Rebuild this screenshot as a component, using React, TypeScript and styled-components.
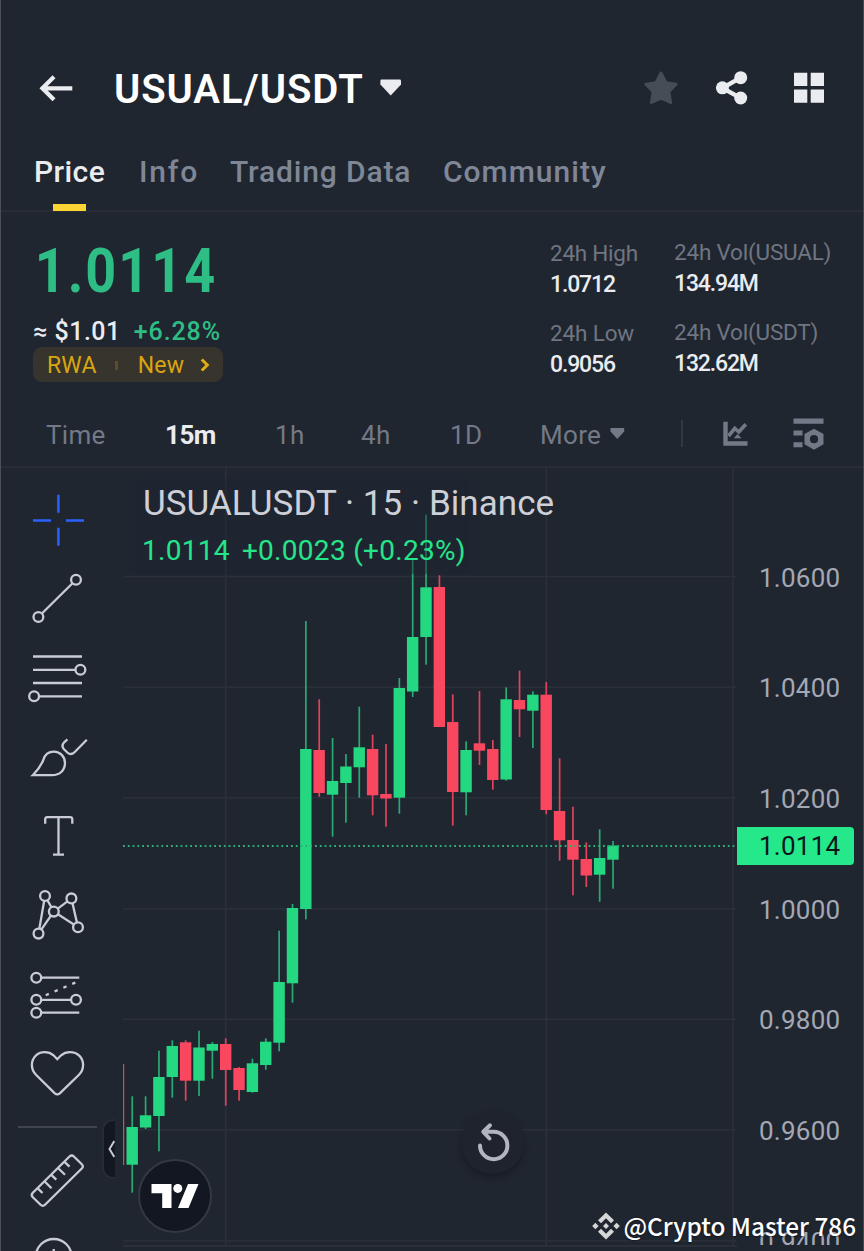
import React from "react";
import styled, { createGlobalStyle } from "styled-components";

const BG = "#202630";
const UP = "#24d881";
const UP_WICK = "#29a973";
const DOWN = "#f8475e";
const DOWN_WICK = "#e0435a";
const LINE = "#2a2f3a";

const GlobalStyle = createGlobalStyle`
  *, *::before, *::after { box-sizing: border-box; }
  body { margin: 0; background: ${BG}; }
`;

const Screen = styled.div`
  position: relative;
  width: 864px;
  height: 1251px;
  overflow: hidden;
  display: flex;
  flex-direction: column;
  background: ${BG};
  border-left: 1px solid #4b5058;
  border-right: 1px solid #43484f;
  font-family: Roboto, "Liberation Sans", sans-serif;
  color: #eaecef;
  white-space: pre;
`;

/* ---------- header ---------- */
const Header = styled.header`
  display: flex;
  align-items: center;
  height: 140px;
  padding: 35px 38px 0 38px;
`;
const PairButton = styled.div`
  display: flex;
  align-items: center;
  margin-left: 41px;
  gap: 16px;
`;
const PairName = styled.h1`
  margin: 0;
  font-size: 40px;
  line-height: 44px;
  font-weight: 600;
  letter-spacing: 0.95px;
  color: #ffffff;
  padding-top: 5px;
`;
const HeaderActions = styled.div`
  display: flex;
  align-items: center;
  margin-left: auto;
`;
const Action = styled.svg<{ $gap?: number }>`
  display: block;
  width: 34px;
  height: 34px;
  margin-right: ${(p) => p.$gap ?? 0}px;
`;

/* ---------- tabs ---------- */
const Tabs = styled.nav`
  display: flex;
  height: 72px;
  padding-left: 31px;
  border-bottom: 2px solid #282d37;
`;
const Tab = styled.div<{ $active?: boolean; $width: number; $spacing?: number }>`
  position: relative;
  width: ${(p) => p.$width}px;
  padding-left: 2px;
  font-size: 30px;
  line-height: 64px;
  font-weight: 500;
  letter-spacing: ${(p) => p.$spacing ?? 0.5}px;
  color: ${(p) => (p.$active ? "#eaecef" : "#7f8796")};
`;
const TabMark = styled.span`
  position: absolute;
  left: 21px;
  bottom: -1px;
  width: 33px;
  height: 7px;
  background: #fcd535;
`;

/* ---------- summary ---------- */
const Summary = styled.section`
  display: flex;
  height: 189px;
  padding-left: 32px;
`;
const PriceBlock = styled.div`
  width: 517px;
  padding-top: 25px;
`;
const BigPrice = styled.div`
  font-size: 62px;
  line-height: 68px;
  font-weight: 700;
  letter-spacing: 2.3px;
  transform: scaleX(0.87);
  transform-origin: 0 50%;
  color: #2ebd85;
  padding-left: 2px;
`;
const FiatRow = styled.div`
  display: flex;
  gap: 13px;
  margin-top: 12px;
  font-size: 25px;
  line-height: 30px;
  font-weight: 500;
  letter-spacing: 0.5px;
`;
const Change = styled.span`
  color: #2ebd85;
  letter-spacing: 0.9px;
`;
const TagBar = styled.div`
  display: flex;
  align-items: center;
  width: 190px;
  height: 35px;
  padding: 1px 13px 0 14px;
  border-radius: 9px;
  background: #37342d;
  color: #d9a60f;
  font-size: 23px;
  letter-spacing: 0.2px;
`;
const TagSplit = styled.i`
  width: 3px;
  height: 9px;
  margin: 0 20px 0 18px;
  background: #5c4d24;
`;
const TagArrow = styled.svg`
  width: 10px;
  height: 14px;
  margin-left: auto;
  fill: none;
  stroke: #e0ad12;
  stroke-width: 3;
`;
const Stats = styled.div`
  display: grid;
  grid-template-columns: 124px 180px;
  grid-template-rows: 80px 80px;
  padding-top: 25px;
`;
const Stat = styled.div<{ $lift?: boolean }>`
  line-height: 31px;
  padding-top: ${(p) => (p.$lift ? 0 : 1)}px;
`;
const StatLabel = styled.div<{ $spacing: number }>`
  color: #6f7581;
  font-size: 22.5px;
  letter-spacing: ${(p) => p.$spacing}px;
`;
const StatValue = styled.div`
  font-size: 23px;
  font-weight: 500;
  letter-spacing: -1.15px;
`;

/* ---------- interval bar ---------- */
const IntervalBar = styled.div`
  display: flex;
  align-items: center;
  height: 67px;
  padding-left: 45px;
  border-bottom: 2px solid #272c37;
`;
const Interval = styled.div<{ $width: number; $active?: boolean }>`
  display: flex;
  align-items: center;
  gap: 9px;
  width: ${(p) => p.$width}px;
  padding-top: 3px;
  font-size: 26px;
  letter-spacing: ${(p) => (p.$active ? -0.5 : 0.3)}px;
  font-weight: ${(p) => (p.$active ? 700 : 400)};
  color: ${(p) => (p.$active ? "#eaecef" : "#737986")};
`;
const Caret = styled.svg`
  width: 15px;
  height: 12px;
  margin-bottom: 3px;
  fill: #737986;
`;
const BarSplit = styled.i`
  width: 2px;
  height: 27px;
  margin-right: 40px;
  background: #323843;
`;
const IndicatorSlot = styled.div`
  display: flex;
  width: 70px;
`;

/* ---------- chart area ---------- */
const ChartArea = styled.main`
  position: relative;
  display: flex;
  flex: 1;
  min-height: 0;
`;
const ToolColumn = styled.aside`
  display: flex;
  flex-direction: column;
  width: 122px;
  padding: 12px 0 0 17px;
`;
const Tool = styled.svg`
  display: block;
  flex: none;
  width: 80px;
  height: 79px;
  fill: none;
  stroke: #c9ccd6;
  stroke-width: 2.3;
`;
const CursorTool = styled(Tool)`
  stroke: #2962ff;
  stroke-width: 2.5;
`;
const ToolSplit = styled.hr`
  flex: none;
  width: 79px;
  height: 2px;
  margin: 14px 0 13px;
  border: 0;
  background: #40444f;
`;
const Plot = styled.svg`
  display: block;
  flex: none;
  width: 614px;
  height: 783px;
`;
const PriceScale = styled.div`
  display: flex;
  flex-direction: column;
  width: 126px;
  height: 777px;
  padding-top: 54.5px;
  overflow: hidden;
`;
const ScaleLabel = styled.div`
  flex: none;
  height: 110.7px;
  padding-left: 22px;
  font-size: 26px;
  line-height: 110.7px;
  letter-spacing: 0.25px;
  color: #a4a8b4;
`;
const PriceTag = styled.div`
  position: absolute;
  left: 736px;
  top: 359px;
  width: 117px;
  height: 38px;
  padding-left: 22px;
  border-radius: 0 4px 4px 0;
  background: #25e88b;
  color: #10151c;
  font-size: 26px;
  line-height: 38px;
  letter-spacing: 0.25px;
`;
const Legend = styled.div`
  position: absolute;
  left: 134px;
  top: 13px;
  padding-left: 7px;
`;
const LegendTitle = styled.div`
  padding-left: 1px;
  font-size: 35px;
  line-height: 46px;
  letter-spacing: 0.05px;
  color: #ced0d8;
`;
const LegendValues = styled.div`
  display: flex;
  gap: 12px;
  margin-top: 5px;
  font-size: 28px;
  line-height: 38px;
  letter-spacing: 0.3px;
  color: #25e58a;
`;
const CollapseHandle = styled.div`
  position: absolute;
  left: 101px;
  top: 651px;
  width: 13px;
  height: 60px;
  border: 2px solid #272b36;
  border-right: 0;
  border-radius: 11px 0 0 11px;
  background: #131722;
  display: flex;
  align-items: center;
  justify-content: flex-end;
`;
const BrandBadge = styled.div`
  position: absolute;
  left: 137px;
  top: 691px;
  width: 74px;
  height: 74px;
  border: 2px solid #343843;
  border-radius: 50%;
  background: #131722;
  display: flex;
  align-items: center;
  justify-content: center;
`;
const ResetButton = styled.div`
  position: absolute;
  left: 460px;
  top: 643px;
  width: 63px;
  height: 63px;
  border-radius: 50%;
  background: #1f232e;
  box-shadow: 0 4px 6px rgba(12, 14, 20, 0.4);
  display: flex;
  align-items: center;
  justify-content: center;
`;
const Watermark = styled.div`
  position: absolute;
  right: 7px;
  bottom: 5px;
  display: flex;
  align-items: center;
  gap: 3px;
  font-family: "Noto Sans CJK SC", "Noto Sans", sans-serif;
  font-size: 24.3px;
  font-weight: 500;
  line-height: 40px;
  color: #ffffff;
  text-shadow: 0 1px 2px rgba(0, 0, 0, 0.5);
`;

/* bodies and wicks in chart pixels: [up, high, bodyTop, bodyBottom, low] */
const candles: [number, number, number, number, number][] = [
  [1, 1096.3, 1127, 1164.7, 1192.7],
  [1, 1096.3, 1115.3, 1127.5, 1129],
  [1, 1050.7, 1077, 1116, 1151.3],
  [1, 1040.3, 1046, 1077, 1097.7],
  [0, 1040.3, 1042.3, 1080.7, 1100.7],
  [1, 1030.7, 1047.5, 1080.7, 1096],
  [1, 1042, 1044, 1050.7, 1078.7],
  [0, 1038.3, 1044, 1070, 1105.7],
  [0, 1067, 1068, 1090, 1100.7],
  [1, 1058.7, 1063.3, 1092, 1092.7],
  [1, 1038.3, 1041.7, 1065, 1069.7],
  [1, 930.7, 982, 1042.7, 1051.3],
  [1, 904, 908, 983.3, 1002.7],
  [1, 621, 749, 909, 919.3],
  [0, 699.3, 750, 793, 796.7],
  [1, 738, 781, 794.7, 836.7],
  [1, 754, 766.5, 783, 822.7],
  [1, 706.7, 747.3, 767.3, 797.7],
  [0, 734.7, 749, 795.3, 815.3],
  [0, 744, 794, 798.5, 826.7],
  [1, 678, 688, 797.7, 813.7],
  [1, 558, 637, 691.5, 697],
  [1, 514.7, 587.3, 637, 664.7],
  [0, 575.3, 587, 727, 727],
  [0, 694.3, 722, 792, 825.7],
  [1, 741.3, 750, 792.3, 815.3],
  [0, 691, 743.3, 750.7, 765],
  [0, 740, 749, 780, 789.7],
  [1, 687.3, 699.3, 779.5, 780.7],
  [0, 670.7, 700, 709.3, 737],
  [1, 691.3, 694.7, 710.7, 748],
  [0, 682, 694.7, 810, 814.3],
  [0, 758.3, 811, 840.3, 860.7],
  [0, 806.7, 840, 859.7, 895.3],
  [0, 842.3, 859, 875.5, 887],
  [1, 829.3, 858, 874.7, 901.7],
  [1, 841, 845.5, 859.7, 888.7],
];
const gridRows = [576.7, 687.5, 798, 909, 1019.5, 1130, 1241];
const scale = ["1.0600", "1.0400", "1.0200", "1.0000", "0.9800", "0.9600", "0.9400"];

function CandlePlot() {
  return (
    <Plot viewBox="123 468 614 783">
      {gridRows.map((y) => (
        <rect key={y} x={123} y={y - 1} width={613} height={1.7} fill={LINE} />
      ))}
      {[225.6, 546.3, 733].map((x) => (
        <rect key={x} x={x - 0.8} y={468} width={1.7} height={777} fill={LINE} />
      ))}
      <rect x={123} y={1245} width={614} height={2} fill={LINE} />
      <rect x={123} y={1064} width={1.2} height={101} fill={DOWN_WICK} />
      {candles.map(([up, hi, top, bottom, lo], i) => {
        const x = 132.2 + 13.355 * i;
        return (
          <g key={i}>
            <rect x={x - 0.8} y={hi} width={1.7} height={lo - hi} fill={up ? UP_WICK : DOWN_WICK} />
            <rect x={x - 5.7} y={top} width={11.4} height={bottom - top} fill={up ? UP : DOWN} />
          </g>
        );
      })}
      <rect x={134} y={478} width={335} height={96} fill={BG} opacity={0.45} />
      <line x1={123} x2={736} y1={846} y2={846} stroke="#28b375" strokeWidth={1.8} strokeDasharray="1.8 3" />
    </Plot>
  );
}

function ToolIcons() {
  return (
    <ToolColumn>
      <CursorTool viewBox="0 -1 80 79">
        <path d="M40.4 13.7V31.7M40.4 46.7V64.7M15 39.4H33M48 39.4H66" />
      </CursorTool>
      <Tool viewBox="0 -1 80 79">
        <path d="M23.9 53.5L54.5 23.2" />
        <circle cx="58" cy="19.7" r="4.9" />
        <circle cx="20.4" cy="57" r="4.9" />
      </Tool>
      <Tool viewBox="0 -1 80 79">
        <path d="M15 17.5H64M15 30.8H57.5M15 44H64M21 57.3H64" />
        <circle cx="62.4" cy="30.8" r="4.9" />
        <circle cx="16.1" cy="57.3" r="4.9" />
      </Tool>
      <Tool viewBox="0 -1 80 79">
        <path d="M14.8 57.2H34C42 57.2 47 52 47 45C47 38.5 42 33.6 36 33.6C30.5 33.6 26.7 37 25.4 41.8C23.5 46.5 19 53 14.8 57.2Z" />
        <path d="M49.4 21.3L46 24.5Q43 28 46 31.2L49.3 34.5Q53 37.7 56.5 34.2L68.8 21.8" />
      </Tool>
      <Tool viewBox="0 -1 80 79">
        <path d="M27.2 26.7V22.5Q27.2 20.2 29.5 20.2H52Q54.3 20.2 54.3 22.5V26.7M40.5 20.2V57.7M35 57.7H46" />
      </Tool>
      <Tool viewBox="0 -1 80 79">
        <path d="M20.5 57.6L27 20L35.8 35.6L53.4 22.4L60 51.2L35.8 35.6Z" />
        <g fill={BG}>
          <circle cx="27" cy="20" r="4.9" />
          <circle cx="53.4" cy="22.4" r="4.9" />
          <circle cx="35.8" cy="35.6" r="4.9" />
          <circle cx="20.5" cy="57.6" r="4.9" />
          <circle cx="60" cy="51.2" r="4.9" />
        </g>
      </Tool>
      <Tool viewBox="0 -1 80 79">
        <path d="M23.3 22.7H61.3M23.3 44.8H53M23.3 57.7H61.3" />
        <path d="M27.7 40.2L58.5 27.1" strokeDasharray="3.4 6.2" />
        <circle cx="18.3" cy="22.7" r="4.9" />
        <circle cx="18.3" cy="44.8" r="4.9" />
        <circle cx="58" cy="44.8" r="4.9" />
        <circle cx="18.3" cy="57.7" r="4.9" />
      </Tool>
      <Tool viewBox="0 -1 80 79">
        <path d="M39.3 25.2L35.5 21.3C32.8 18.9 30 18.1 26.8 18.1C19 18.1 13.9 24 13.9 31C13.9 35 15.3 38 18 40.8L36.8 59.3Q39.3 61.5 41.8 59.3L61 40.8C63.7 38 65.1 35 65.1 31C65.1 24 59.8 18.1 52 18.1C48.8 18.1 45.9 18.9 43.1 21.3Z" />
      </Tool>
      <ToolSplit />
      <Tool viewBox="0 0 80 79">
        <path d="M51.5 15.5Q53.7 13.4 55.9 15.5L63.8 23.2Q66 25.3 63.8 27.5L27 63.8Q24.8 66 22.6 63.8L14.8 56.2Q12.6 54 14.8 51.8Z" />
        <path d="M19.5 47.2L24.5 52M26.5 40.3L33.5 47.3M33.3 33.8L38.3 38.6M40 27L47 33.8M46.5 20.8L51.5 25.6" />
      </Tool>
      <Tool viewBox="0 0 80 79">
        <circle cx="35.7" cy="37" r="18" />
        <path d="M35.7 29V45M27.7 37H43.7M48.7 50L62 63" />
      </Tool>
    </ToolColumn>
  );
}

function Stats24h() {
  return (
    <Stats>
      <Stat>
        <StatLabel $spacing={-0.25}>24h High</StatLabel>
        <StatValue>1.0712</StatValue>
      </Stat>
      <Stat $lift>
        <StatLabel $spacing={-0.2}>24h Vol(USUAL)</StatLabel>
        <StatValue>134.94M</StatValue>
      </Stat>
      <Stat>
        <StatLabel $spacing={-0.15}>24h Low</StatLabel>
        <StatValue>0.9056</StatValue>
      </Stat>
      <Stat $lift>
        <StatLabel $spacing={-0.2}>24h Vol(USDT)</StatLabel>
        <StatValue>132.62M</StatValue>
      </Stat>
    </Stats>
  );
}

export default function App() {
  return (
    <>
      <GlobalStyle />
      <Screen>
        <Header>
          <svg width="34" height="28" viewBox="39 73 34 28" fill="none" stroke="#eaecef" strokeWidth="4.2">
            <path d="M54 75.8L42.4 87.3L54 98.8M42.5 87.3H72.3" />
          </svg>
          <PairButton>
            <PairName>USUAL/USDT</PairName>
            <svg width="22" height="18" viewBox="380 79 22 18" fill="#eaecef">
              <path d="M381.5 79.5H399.8Q401 79.5 401 80.7V84.5L390.7 95.5L380.4 84.5V80.7Q380.4 79.5 381.5 79.5Z" />
            </svg>
          </PairButton>
          <HeaderActions>
            <Action $gap={37} viewBox="644 70.5 34 34">
              <path
                d="M661 72.5L666 82.3L676 83.7L668.8 91.3L670.6 102L661 97.7L651.4 102L653.2 91.3L646 83.7L656 82.3Z"
                fill="#474d57" stroke="#474d57" strokeWidth="3" strokeLinejoin="round"
              />
            </Action>
            <Action $gap={42} viewBox="715 70.5 34 34" fill="#eaecef">
              <path d="M740.7 77.2L722.4 87.5L740.7 97.6" fill="none" stroke="#eaecef" strokeWidth="4.4" />
              <circle cx="740.7" cy="77.2" r="6.5" />
              <circle cx="722.4" cy="87.3" r="6.5" />
              <circle cx="740.7" cy="97.5" r="6.5" />
            </Action>
            <Action viewBox="791 70.5 34 34" fill="#eaecef">
              <path d="M794 72.3h13.3v13.3h-13.3zM810.7 72.3h13.3v13.3h-13.3zM794 89h13.3v13.3h-13.3zM810.7 89h13.3v13.3h-13.3z" />
            </Action>
          </HeaderActions>
        </Header>

        <Tabs>
          <Tab $active $width={105} $spacing={0.4}>
            Price
            <TabMark />
          </Tab>
          <Tab $width={91} $spacing={1.8}>Info</Tab>
          <Tab $width={213} $spacing={0.85}>Trading Data</Tab>
          <Tab $width={180} $spacing={1}>Community</Tab>
        </Tabs>

        <Summary>
          <PriceBlock>
            <BigPrice>1.0114</BigPrice>
            <FiatRow>
              <span>≈ $1.01</span>
              <Change>+6.28%</Change>
            </FiatRow>
            <TagBar>
              <span>RWA</span>
              <TagSplit />
              <span>New</span>
              <TagArrow viewBox="0 0 10 14">
                <path d="M1.8 1.5L7.3 7L1.8 12.5" />
              </TagArrow>
            </TagBar>
          </PriceBlock>
          <Stats24h />
        </Summary>

        <IntervalBar>
          <Interval $width={119}>Time</Interval>
          <Interval $width={110} $active>15m</Interval>
          <Interval $width={86}>1h</Interval>
          <Interval $width={89}>4h</Interval>
          <Interval $width={90}>1D</Interval>
          <Interval $width={141}>
            More
            <Caret viewBox="0 0 15 12">
              <path d="M.5 0H14.2V3.6L7.3 11L.5 3.6Z" />
            </Caret>
          </Interval>
          <BarSplit />
          <IndicatorSlot>
            <svg width="26" height="26" viewBox="723.5 420 26 26" fill="none" stroke="#737986">
              <path d="M726 420.7V442.5H748" strokeWidth="4.4" />
              <path d="M729 435L735.3 427.3L739.3 431L746.3 423.2" strokeWidth="3.6" />
              <path d="M738 433L742 437.2H734.3Z" fill="#737986" stroke="none" />
            </svg>
          </IndicatorSlot>
          <svg width="32" height="32" viewBox="793.5 417.7 32 32" fill="#737986">
            <path d="M794 418.2h30v5.2h-30zM794 430.2h9v5h-9zM794 442h9v5h-9z" />
            <path fillRule="evenodd" d="M814.5 428.5L824 433.8V444L814.5 449.5L805 444V433.8ZM814.5 434.8a4.1 4.1 0 1 0 0 8.2a4.1 4.1 0 1 0 0 -8.2Z" />
          </svg>
        </IntervalBar>

        <ChartArea>
          <ToolIcons />
          <CandlePlot />
          <PriceScale>
            {scale.map((v) => (
              <ScaleLabel key={v}>{v}</ScaleLabel>
            ))}
          </PriceScale>
          <Legend>
            <LegendTitle>USUALUSDT · 15 · Binance</LegendTitle>
            <LegendValues>
              <span>1.0114</span>
              <span>+0.0023 (+0.23%)</span>
            </LegendValues>
          </Legend>
          <PriceTag>1.0114</PriceTag>
          <CollapseHandle>
            <svg width="7" height="18" viewBox="0 0 7 18" fill="none" stroke="#c9ccd6" strokeWidth="2">
              <path d="M6.3 1L1.5 9L6.3 17" />
            </svg>
          </CollapseHandle>
          <BrandBadge>
            <svg width="48" height="24" viewBox="151.5 1185.7 48 24" fill="#ffffff">
              <path d="M152 1185.7H172V1209.7H162.7V1195H152ZM188.5 1185.7H199L189 1209.7H178.5Z" />
              <circle cx="178.3" cy="1190.1" r="4.5" />
            </svg>
          </BrandBadge>
          <ResetButton>
            <svg width="34" height="42" viewBox="476 1122 34 42" fill="none" stroke="#b2b5be" strokeWidth="4" strokeLinecap="round" strokeLinejoin="round">
              <path d="M480 1145.5A13.7 13.7 0 1 0 493.7 1131.8H484M490 1125.3L483.3 1131.8L489.5 1138.5" />
            </svg>
          </ResetButton>
        </ChartArea>

        <Watermark>
          <svg width="28" height="28" viewBox="0 0 28 28" fill="#d6d6d6">
            <path d="M14 0.5L22 8.3L19 11.3L14 6.3L9 11.3L6 8.3ZM14 27.5L22 19.7L19 16.7L14 21.7L9 16.7L6 19.7ZM14 11L17 14L14 17L11 14ZM3.4 10.8L6.6 14L3.4 17.2L.2 14ZM24.6 10.8L27.8 14L24.6 17.2L21.4 14Z" />
          </svg>
          <span>@Crypto Master 786</span>
        </Watermark>
      </Screen>
    </>
  );
}
